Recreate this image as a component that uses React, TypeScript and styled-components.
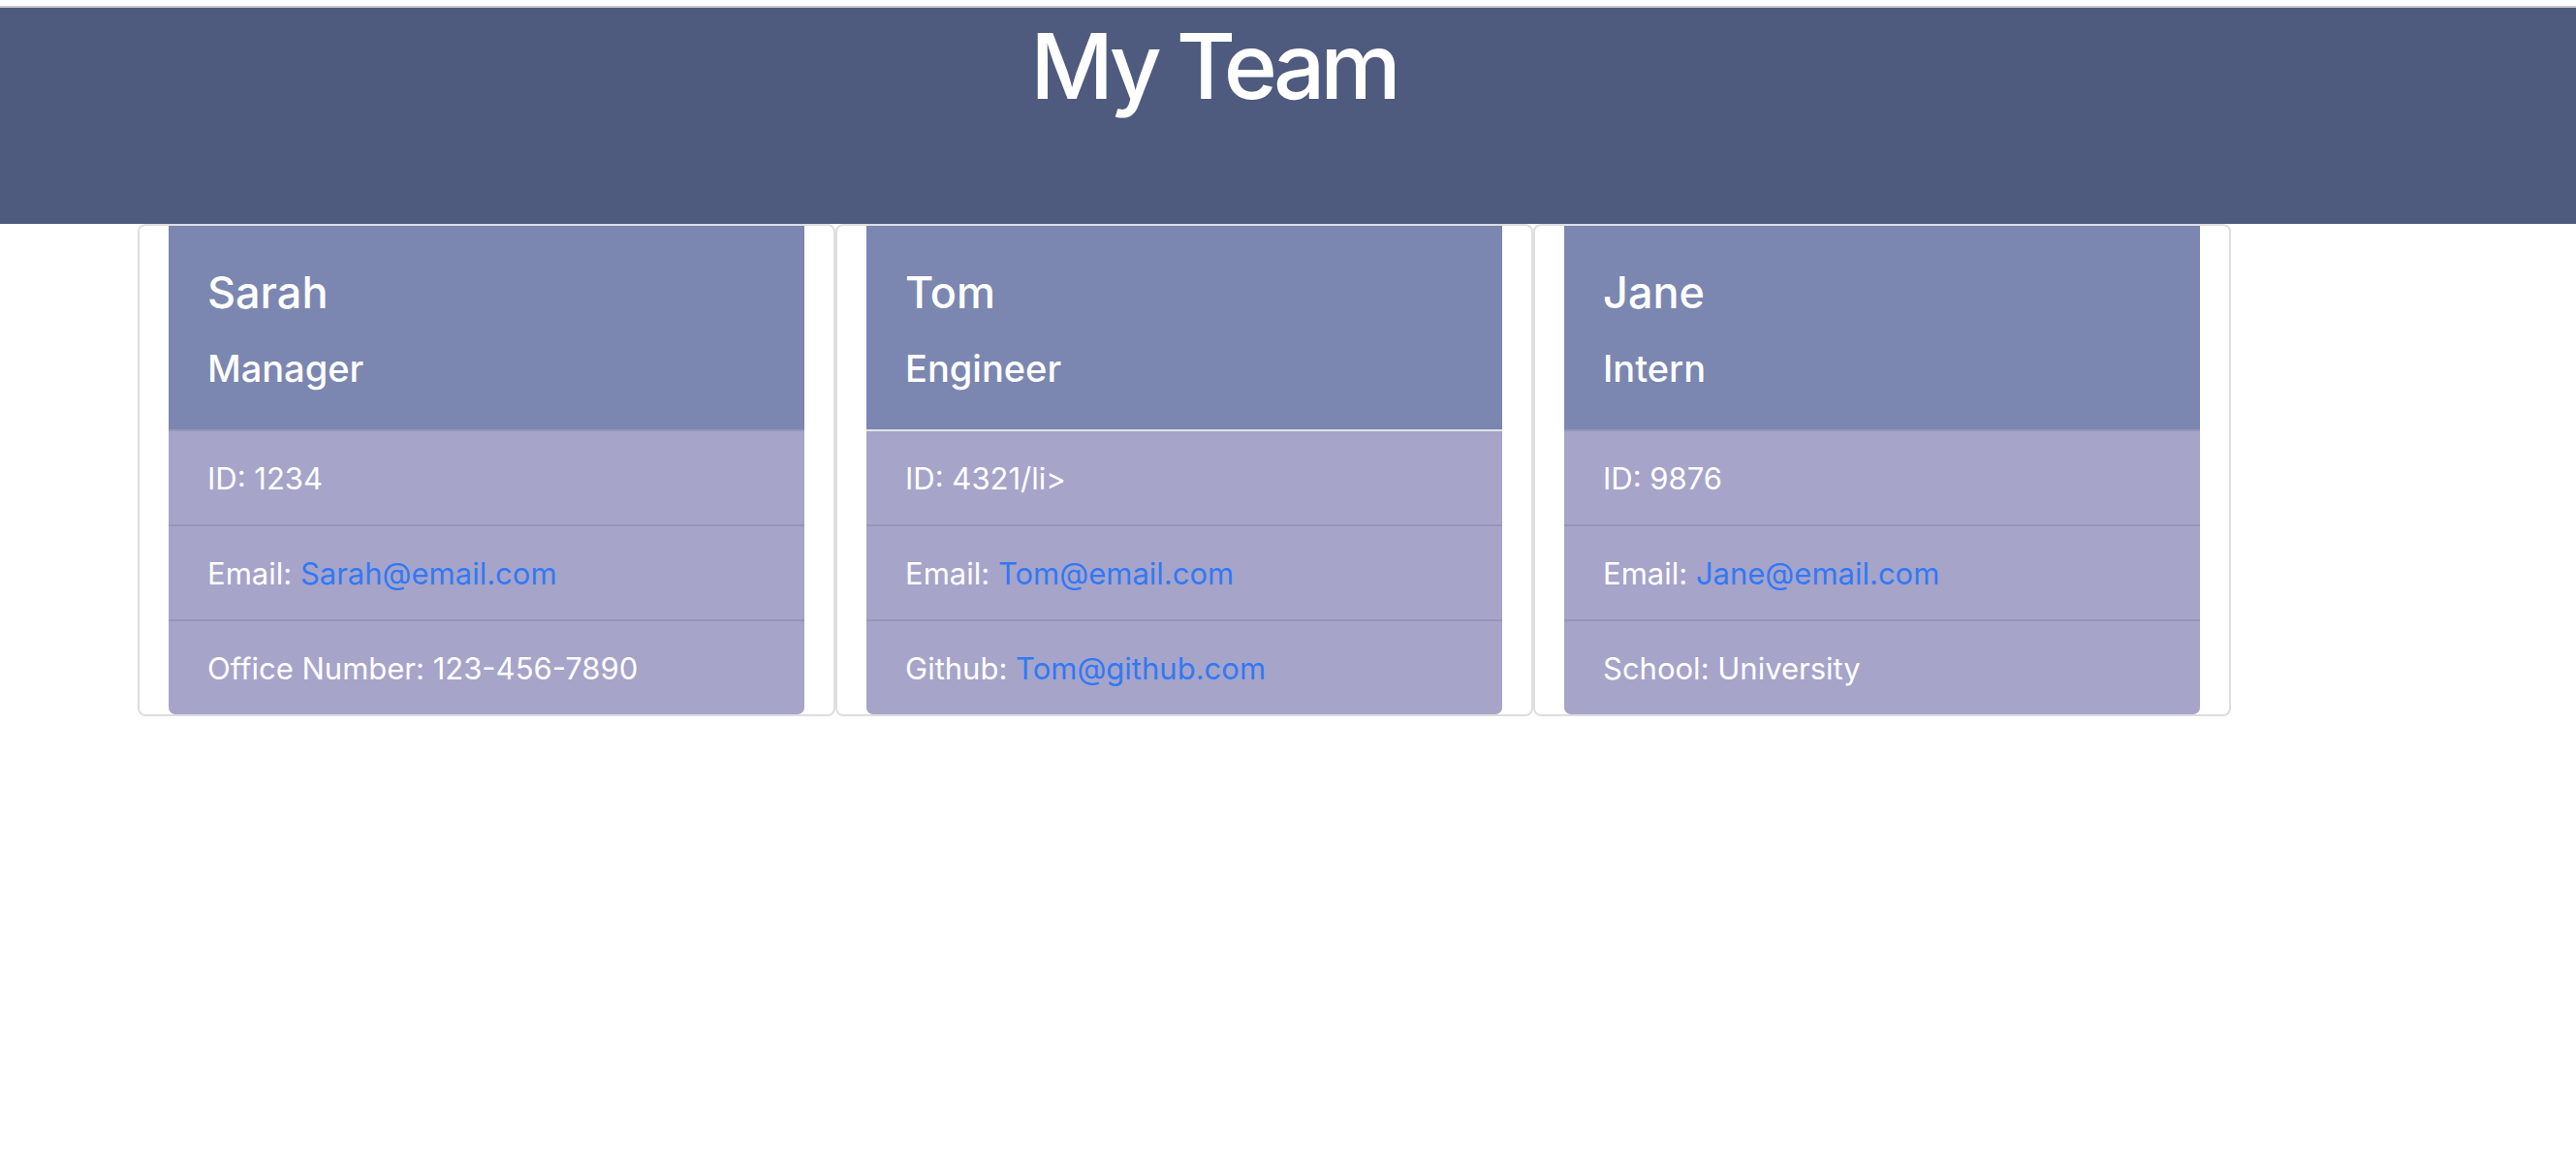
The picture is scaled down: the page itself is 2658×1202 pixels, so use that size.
import React from "react";
import styled, { createGlobalStyle } from "styled-components";

const GlobalStyle = createGlobalStyle`
  html, body {
    margin: 0;
    padding: 0;
    background: #ffffff;
  }
  body {
    font-family: Inter, "Liberation Sans", Arial, sans-serif;
    color: #212529;
  }
  * { box-sizing: border-box; }
`;

const Page = styled.div`
  padding-top: 6px;
  min-height: 1202px;
`;

const Header = styled.header`
  background: #4e5b7f;
  border-top: 2px solid #c9cacd;
  height: 225px;
  padding: 12px 0 0 142px;
`;

const TitleBox = styled.div`
  width: 2220px;
  text-align: center;
`;

const Title = styled.h1`
  margin: 0;
  font-family: Inter, "Liberation Sans", Arial, sans-serif;
  font-weight: 500;
  font-size: 94px;
  line-height: 96px;
  letter-spacing: -5px;
  color: #ffffff;
`;

const CardRow = styled.main`
  display: flex;
  padding-left: 142px;
`;

const CardShell = styled.section`
  width: 720px;
  border: 2px solid #dedede;
  border-radius: 8px;
  padding: 0 30px;
`;

const CardHead = styled.div`
  background: #7b87b0;
  padding: 40px 40px;
`;

const Name = styled.h2`
  margin: 0 0 26px 0;
  font-size: 45px;
  line-height: 58px;
  font-weight: 500;
  color: #ffffff;
`;

const Role = styled.h3`
  margin: 0;
  font-size: 38px;
  line-height: 46px;
  font-weight: 500;
  color: #ffffff;
`;

const List = styled.ul<{ $light?: boolean }>`
  list-style: none;
  margin: 0;
  padding: 0;
  background: #a6a4c9;
  border-radius: 0 0 7px 7px;
  overflow: hidden;
  border-top: 2px solid ${(p) => (p.$light ? "#e2e2e8" : "#9795b8")};
`;

const Item = styled.li`
  padding: 25px 40px 23px;
  font-size: 31px;
  line-height: 48px;
  color: #ffffff;
  & + & {
    border-top: 2px solid #9795b8;
  }
`;

const Link = styled.a`
  color: #3179f5;
  text-decoration: none;
`;

type Member = {
  name: string;
  role: string;
  id: string;
  email: string;
  extraLabel: string;
  extra: string;
  extraIsLink?: boolean;
  lightDivider?: boolean;
};

const team: Member[] = [
  {
    name: "Sarah",
    role: "Manager",
    id: "1234",
    email: "Sarah@email.com",
    extraLabel: "Office Number",
    extra: "123-456-7890",
  },
  {
    name: "Tom",
    role: "Engineer",
    id: "4321/li>",
    email: "Tom@email.com",
    extraLabel: "Github",
    extra: "Tom@github.com",
    extraIsLink: true,
    lightDivider: true,
  },
  {
    name: "Jane",
    role: "Intern",
    id: "9876",
    email: "Jane@email.com",
    extraLabel: "School",
    extra: "University",
  },
];

function TeamCard({ m }: { m: Member }) {
  return (
    <CardShell>
      <CardHead>
        <Name>{m.name}</Name>
        <Role>{m.role}</Role>
      </CardHead>
      <List $light={m.lightDivider}>
        <Item>ID: {m.id}</Item>
        <Item>
          Email: <Link href={`mailto:${m.email}`}>{m.email}</Link>
        </Item>
        <Item>
          {m.extraLabel}:{" "}
          {m.extraIsLink ? <Link href="#">{m.extra}</Link> : m.extra}
        </Item>
      </List>
    </CardShell>
  );
}

export default function App() {
  return (
    <>
      <GlobalStyle />
      <Page>
        <Header>
          <TitleBox>
            <Title>My Team</Title>
          </TitleBox>
        </Header>
        <CardRow>
          {team.map((m) => (
            <TeamCard key={m.name} m={m} />
          ))}
        </CardRow>
      </Page>
    </>
  );
}
